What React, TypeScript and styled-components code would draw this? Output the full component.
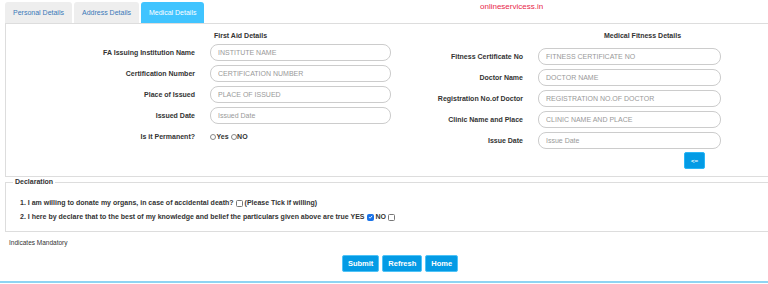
import React from "react";
import styled, { createGlobalStyle } from "styled-components";

const Global = createGlobalStyle`
  html, body { margin: 0; padding: 0; background: #fff; overflow: hidden; }
  body { font-family: "Liberation Sans", Arial, sans-serif; color: #333; }
  * { box-sizing: border-box; }
`;

const Page = styled.div`
  width: 800px;
  position: relative;
`;

const TabBar = styled.div`
  display: flex;
  align-items: flex-end;
  height: 23px;
  padding: 2px 0 0 5px;
`;

const Tab = styled.div<{ $active?: boolean }>`
  height: 21px;
  padding: 0 8px;
  margin-right: 2px;
  display: flex;
  align-items: center;
  font-size: 7px;
  border-radius: 3px 3px 0 0;
  background: ${(p) => (p.$active ? "#40c4ff" : "#eeeeee")};
  color: ${(p) => (p.$active ? "#ffffff" : "#3a78b8")};
`;

const Brand = styled.div`
  position: absolute;
  left: 480px;
  top: 2px;
  font-size: 8px;
  color: #e8284a;
`;

const Panel = styled.div`
  margin-left: 5px;
  border: 1px solid #dddddd;
  border-right: none;
  display: flex;
  padding: 8px 0 7px 0;
`;

const Column = styled.div<{ $width: number; $label: number; $input: number }>`
  width: ${(p) => p.$width}px;
  display: grid;
  grid-template-columns: ${(p) => p.$label}px ${(p) => p.$input}px;
  column-gap: 15px;
  row-gap: 4px;
  align-content: start;
  align-items: center;
`;

const Heading = styled.div<{ $offset: number; $below: number }>`
  grid-column: 1 / -1;
  margin-left: ${(p) => p.$offset}px;
  margin-bottom: ${(p) => p.$below}px;
  font-size: 7px;
  line-height: 8px;
  font-weight: bold;
  color: #333;
`;

const Label = styled.div`
  text-align: right;
  font-size: 7px;
  font-weight: bold;
  color: #333;
  white-space: nowrap;
`;

const Field = styled.input`
  height: 17px;
  width: 100%;
  border: 1px solid #cccccc;
  border-radius: 8px;
  padding: 0 7px;
  font-family: "Liberation Sans", Arial, sans-serif;
  font-size: 7px;
  color: #555;
  outline: none;
  background: #fff;
  &::placeholder { color: #999999; }
`;

const RadioGroup = styled.div`
  height: 17px;
  display: flex;
  align-items: center;
  font-size: 7px;
  font-weight: bold;
  color: #333;
`;

const Radio = styled.span<{ $gap?: boolean }>`
  display: inline-block;
  width: 6px;
  height: 6px;
  border: 1px solid #888;
  border-radius: 50%;
  margin-right: 0.5px;
  margin-left: ${(p) => (p.$gap ? "2px" : "0")};
`;

const BackButton = styled.button`
  grid-column: 2;
  justify-self: end;
  margin-right: 16px;
  margin-top: -1px;
  width: 21px;
  height: 17px;
  padding: 0;
  border: 1px solid #29b6f6;
  border-radius: 2px;
  background: #039be5;
  color: #fff;
  font-family: "Liberation Sans", Arial, sans-serif;
  font-size: 6px;
  font-weight: bold;
`;

const Fieldset = styled.fieldset`
  margin: 0 0 0 5px;
  padding: 9px 14px 7px;
  border: 1px solid #dddddd;
  border-right: none;
  min-width: 0;
`;

const Legend = styled.legend`
  margin-left: -7px;
  padding: 0 2px;
  font-size: 7px;
  line-height: 10px;
  font-weight: bold;
  color: #333;
`;

const DeclLine = styled.div`
  font-size: 7px;
  line-height: 14px;
  font-weight: bold;
  color: #333;
  white-space: nowrap;
  display: flex;
  align-items: center;
`;

const Check = styled.span<{ $checked?: boolean }>`
  display: inline-flex;
  align-items: center;
  justify-content: center;
  width: 7px;
  height: 7px;
  margin: 0 2px;
  border: 1px solid ${(p) => (p.$checked ? "#1a73e8" : "#777")};
  border-radius: 1.5px;
  background: ${(p) => (p.$checked ? "#1a73e8" : "#fff")};
`;

const Mandatory = styled.div`
  margin-top: 6px;
  padding-left: 9px;
  font-size: 6.5px;
  line-height: 9px;
  color: #333;
`;

const Actions = styled.div`
  margin-top: 8px;
  display: flex;
  justify-content: center;
  gap: 3px;
`;

const ActionButton = styled.button`
  height: 17px;
  padding: 0 5px;
  border: 1px solid #4fc3f7;
  border-radius: 2px;
  background: #039be5;
  color: #fff;
  font-family: "Liberation Sans", Arial, sans-serif;
  font-size: 7.5px;
  font-weight: bold;
`;

const Footer = styled.div`
  margin-top: 9px;
  height: 4px;
  border-top: 2px solid #8fd4f2;
`;

const leftRows = [
  ["FA Issuing Institution Name", "INSTITUTE NAME"],
  ["Certification Number", "CERTIFICATION NUMBER"],
  ["Place of Issued", "PLACE OF ISSUED"],
  ["Issued Date", "Issued Date"],
];

const rightRows = [
  ["Fitness Certificate No", "FITNESS CERTIFICATE NO"],
  ["Doctor Name", "DOCTOR NAME"],
  ["Registration No.of Doctor", "REGISTRATION NO.OF DOCTOR"],
  ["Clinic Name and Place", "CLINIC NAME AND PLACE"],
  ["Issue Date", "Issue Date"],
];

const Tick = () => (
  <svg width="6" height="6" viewBox="0 0 10 10">
    <path d="M2 5.2 L4.2 7.4 L8.2 2.8" fill="none" stroke="#fff" strokeWidth="1.8" />
  </svg>
);

export default function App() {
  return (
    <Page>
      <Global />
      <TabBar>
        <Tab>Personal Details</Tab>
        <Tab>Address Details</Tab>
        <Tab $active>Medical Details</Tab>
      </TabBar>
      <Brand>onlineservicess.in</Brand>
      <Panel>
        <Column $width={394} $label={189} $input={181}>
          <Heading $offset={208} $below={0}>First Aid Details</Heading>
          {leftRows.map(([l, p]) => (
            <React.Fragment key={l}>
              <Label>{l}</Label>
              <Field placeholder={p} />
            </React.Fragment>
          ))}
          <Label>Is it Permanent?</Label>
          <RadioGroup>
            <Radio />Yes<Radio $gap />NO
          </RadioGroup>
        </Column>
        <Column $width={400} $label={123} $input={183}>
          <Heading $offset={204} $below={4}>Medical Fitness Details</Heading>
          {rightRows.map(([l, p]) => (
            <React.Fragment key={l}>
              <Label>{l}</Label>
              <Field placeholder={p} />
            </React.Fragment>
          ))}
          <BackButton>&lt;=</BackButton>
        </Column>
      </Panel>
      <Fieldset>
        <Legend>Declaration</Legend>
        <DeclLine>
          1. I am willing to donate my organs, in case of accidental death? <Check /> (Please Tick if willing)
        </DeclLine>
        <DeclLine>
          2. I here by declare that to the best of my knowledge and belief the particulars given above are true YES{" "}
          <Check $checked>
            <Tick />
          </Check>
          NO <Check />
        </DeclLine>
      </Fieldset>
      <Mandatory>Indicates Mandatory</Mandatory>
      <Actions>
        <ActionButton>Submit</ActionButton>
        <ActionButton>Refresh</ActionButton>
        <ActionButton>Home</ActionButton>
      </Actions>
      <Footer />
    </Page>
  );
}
